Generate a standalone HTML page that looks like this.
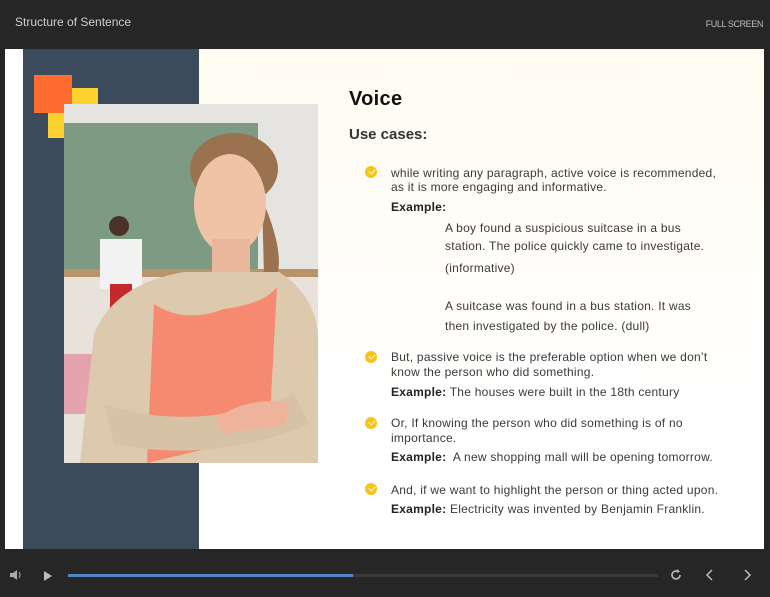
<!DOCTYPE html>
<html><head><meta charset="utf-8"><style>
*{margin:0;padding:0;box-sizing:border-box}
body{width:770px;height:597px;background:#262626;position:relative;overflow:hidden;font-family:"Liberation Sans",sans-serif}
.a{position:absolute;white-space:nowrap}
.t{font-size:12px;color:#3a3a3a;line-height:16px;height:16px;letter-spacing:0.25px}
.t b{color:#222}
.chk{position:absolute;width:12px;height:12px;border-radius:50%;background:#f5c518}
.chk:after{content:"";position:absolute;left:3.5px;top:3px;width:5px;height:3px;border-left:1.3px solid #fff;border-bottom:1.3px solid #fff;transform:rotate(-45deg)}
</style></head><body>
<div class="a" style="left:15px;top:15px;font-size:12px;color:#cfcfcf">Structure of Sentence</div>
<div class="a" style="right:7px;top:19px;font-size:9px;color:#bbb;letter-spacing:-0.4px">FULL SCREEN</div>

<div class="a" style="left:5px;top:49px;width:759px;height:500px;background:linear-gradient(180deg,#fffbf0,#fff 70%);"></div>
<div class="a" style="left:5px;top:49px;width:18px;height:500px;background:#fff"></div>
<div class="a" style="left:23px;top:49px;width:176px;height:500px;background:#3c4b5c"></div>
<div class="a" style="left:48px;top:88px;width:50px;height:50px;background:#fdd22f"></div>
<div class="a" style="left:34px;top:75px;width:38px;height:38px;background:#fe6c30"></div>

<svg class="a" style="left:64px;top:104px" width="254" height="359" viewBox="0 0 254 359">
<rect width="254" height="359" fill="#e6e4e0"/>
<rect x="0" y="19" width="194" height="150" fill="#7d9a82"/>
<rect x="0" y="165" width="254" height="8" fill="#b8946a"/>
<rect x="0" y="173" width="254" height="186" fill="#e8e2da"/>
<rect x="0" y="250" width="30" height="60" fill="#e5a3ae"/>
<rect x="36" y="135" width="42" height="50" fill="#f2f2f2"/>
<rect x="46" y="180" width="22" height="50" fill="#c42a2a"/>
<circle cx="55" cy="122" r="10" fill="#4a3228"/>
<ellipse cx="170" cy="65" rx="44" ry="36" fill="#9b7250"/>
<path d="M198 95 Q222 150 212 175 L200 172 Z" fill="#9b7250"/>
<ellipse cx="166" cy="100" rx="36" ry="50" fill="#f0c2a6"/>
<rect x="148" y="135" width="38" height="50" fill="#eab79c"/>
<path d="M16 359 L30 230 Q50 180 120 168 L215 168 Q250 190 254 230 L254 359 Z" fill="#dcc9ae"/>
<path d="M83 359 L90 200 Q120 220 160 205 Q200 200 213 183 L205 330 Z" fill="#f58a70"/>
<path d="M40 300 Q130 330 230 290 L245 320 Q150 360 50 340 Z" fill="#d7c2a6"/>
<path d="M150 315 Q190 290 225 300 L222 320 Q190 325 160 330 Z" fill="#eeb39a"/>
</svg>

<div class="a" style="left:349px;top:88px;font-size:20px;font-weight:bold;color:#111;letter-spacing:0.3px">Voice</div>
<div class="a" style="left:349px;top:126px;font-size:15px;font-weight:bold;color:#333">Use cases:</div>

<div class="chk" style="left:365px;top:166px"></div>
<div class="a t" style="left:391px;top:165px">while writing any paragraph, active voice is recommended,</div>
<div class="a t" style="left:391px;top:179px">as it is more engaging and informative.</div>
<div class="a t" style="left:391px;top:199px"><b>Example:</b></div>
<div class="a t" style="left:445px;top:220px">A boy found a suspicious suitcase in a bus</div>
<div class="a t" style="left:445px;top:238px">station. The police quickly came to investigate.</div>
<div class="a t" style="left:445px;top:260px">(informative)</div>
<div class="a t" style="left:445px;top:298px">A suitcase was found in a bus station. It was</div>
<div class="a t" style="left:445px;top:318px">then investigated by the police. (dull)</div>

<div class="chk" style="left:365px;top:351px"></div>
<div class="a t" style="left:391px;top:349px">But, passive voice is the preferable option when we don’t</div>
<div class="a t" style="left:391px;top:364px">know the person who did something.</div>
<div class="a t" style="left:391px;top:384px"><b>Example:</b> The houses were built in the 18th century</div>

<div class="chk" style="left:365px;top:417px"></div>
<div class="a t" style="left:391px;top:415px">Or, If knowing the person who did something is of no</div>
<div class="a t" style="left:391px;top:430px">importance.</div>
<div class="a t" style="left:391px;top:449px"><b>Example:</b>&nbsp; A new shopping mall will be opening tomorrow.</div>

<div class="chk" style="left:365px;top:483px"></div>
<div class="a t" style="left:391px;top:482px">And, if we want to highlight the person or thing acted upon.</div>
<div class="a t" style="left:391px;top:501px"><b>Example:</b> Electricity was invented by Benjamin Franklin.</div>

<svg class="a" style="left:9px;top:569px" width="14" height="12" viewBox="0 0 14 12"><path d="M1 4h3l4-3v10l-4-3H1z" fill="#aaa"/><path d="M10 3q2 3 0 6" stroke="#aaa" fill="none"/></svg>
<svg class="a" style="left:43px;top:570px" width="10" height="12" viewBox="0 0 10 12"><path d="M1 1l8 5-8 5z" fill="#bbb"/></svg>
<div class="a" style="left:68px;top:574px;width:590px;height:3px;background:#3a3a3a"></div>
<div class="a" style="left:68px;top:574px;width:285px;height:3px;background:#4f86c6"></div>
<svg class="a" style="left:669px;top:568px" width="14" height="14" viewBox="0 0 14 14"><path d="M11 7a4 4 0 1 1-2-3.5" stroke="#bbb" stroke-width="1.6" fill="none"/><path d="M8 1l3 2.5-3.2 1.5z" fill="#bbb"/></svg>
<svg class="a" style="left:705px;top:568px" width="10" height="14" viewBox="0 0 10 14"><path d="M7 2L2 7l5 5" stroke="#bbb" stroke-width="1.5" fill="none"/></svg>
<svg class="a" style="left:742px;top:568px" width="10" height="14" viewBox="0 0 10 14"><path d="M3 2l5 5-5 5" stroke="#bbb" stroke-width="1.5" fill="none"/></svg>
</body></html>
